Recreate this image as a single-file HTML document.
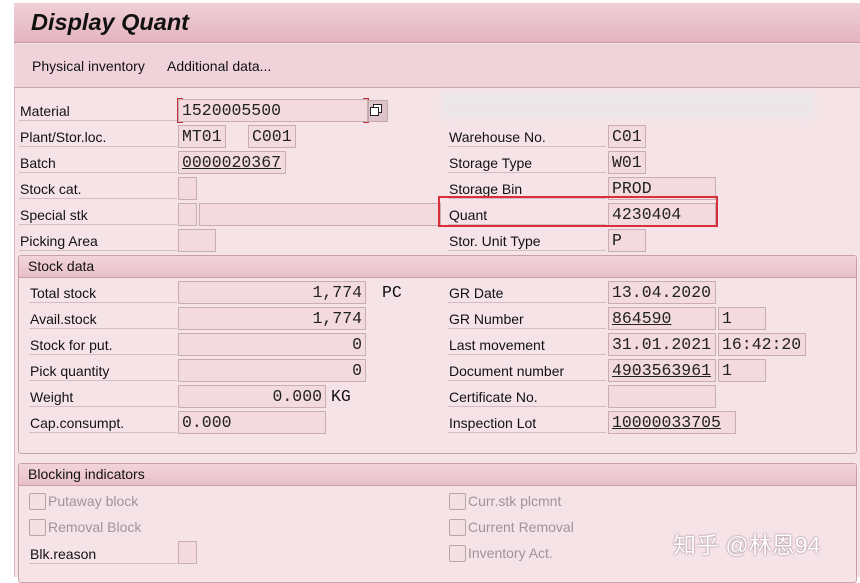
<!DOCTYPE html>
<html><head><meta charset="utf-8"><style>
*{margin:0;padding:0;box-sizing:border-box}
body{width:860px;height:577px;background:#fff;position:relative;overflow:hidden;font-family:"Liberation Sans",sans-serif;font-size:14px;color:#111}
.a{position:absolute}
.main{left:14px;top:3px;width:846px;height:574px;background:#f6e3e7;border-left:1px solid #d8b8c0}
.title{left:14px;top:3px;width:846px;height:40px;background:linear-gradient(#f0d0d8,#e4b4c0);border-bottom:1px solid #c89aa6}
.title span{position:absolute;left:17px;top:6px;font-size:23.5px;font-weight:bold;font-style:italic;color:#111}
.tb{left:14px;top:44px;width:846px;height:44px;background:#f0d3da;border-bottom:1px solid #c8a6ae}
.tb span{position:absolute;top:14px;font-size:14px}
.l{height:20px;line-height:20px;border-bottom:1px solid #d4bcc2;padding-left:1px}
.f{height:23px;border:1px solid #c8aeb4;background:#f2dade;font-family:"Liberation Mono",monospace;font-size:16.5px;line-height:21px;padding:0 3px;color:#222;white-space:nowrap;overflow:hidden}
.r{text-align:right}
.u{text-decoration:underline}
.grp{border:1px solid #c8a0aa;border-radius:3px;background:#f6e3e7}
.gh{height:22px;background:linear-gradient(#f2d4da,#e9c0c9);border-bottom:1px solid #caa0aa;padding-left:9px;line-height:21px;font-size:14px}
.cb{width:17px;height:17px;border:1px solid #b9a4a8;border-radius:2px;background:#f4e0e4}
.g{color:#a09498}
</style></head><body>
<div class="a main"></div>
<div class="a title"><span>Display Quant</span></div>
<div class="a tb"><span style="left:18px">Physical inventory</span><span style="left:153px">Additional data...</span></div>

<div class="a" style="left:442px;top:92px;width:372px;height:26px;background:#ece6e8;filter:blur(3px)"></div>

<div class="a l" style="left:19px;top:101px;width:158px">Material</div>
<div class="a f" style="left:178px;top:99px;width:190px">1520005500</div>
<div class="a" style="left:177px;top:98px;width:6px;height:25px;border:1px solid #c03030;border-right:none"></div>
<div class="a" style="left:363px;top:98px;width:6px;height:25px;border:1px solid #c03030;border-left:none"></div>
<div class="a" style="left:368px;top:100px;width:20px;height:22px;background:#ddc4ca;border:1px solid #c4a8ae"></div>
<div class="a" style="left:373px;top:104px;width:9px;height:9px;border:1px solid #222;background:#fff"></div>
<div class="a" style="left:370px;top:107px;width:9px;height:9px;border:1px solid #222;background:#fff"></div>

<div class="a l" style="left:19px;top:127px;width:158px">Plant/Stor.loc.</div>
<div class="a f" style="left:178px;top:125px;width:48px">MT01</div>
<div class="a f" style="left:248px;top:125px;width:48px">C001</div>
<div class="a l" style="left:19px;top:153px;width:158px">Batch</div>
<div class="a f u" style="left:178px;top:151px;width:108px">0000020367</div>
<div class="a l" style="left:19px;top:179px;width:158px">Stock cat.</div>
<div class="a f" style="left:178px;top:177px;width:19px"></div>
<div class="a l" style="left:19px;top:205px;width:158px">Special stk</div>
<div class="a f" style="left:178px;top:203px;width:19px"></div>
<div class="a f" style="left:199px;top:203px;width:242px"></div>
<div class="a l" style="left:19px;top:231px;width:158px">Picking Area</div>
<div class="a f" style="left:178px;top:229px;width:38px"></div>

<div class="a l" style="left:448px;top:127px;width:158px">Warehouse No.</div>
<div class="a f" style="left:608px;top:125px;width:38px">C01</div>
<div class="a l" style="left:448px;top:153px;width:158px">Storage Type</div>
<div class="a f" style="left:608px;top:151px;width:38px">W01</div>
<div class="a l" style="left:448px;top:179px;width:158px">Storage Bin</div>
<div class="a f" style="left:608px;top:177px;width:108px">PROD</div>
<div class="a l" style="left:448px;top:205px;width:158px">Quant</div>
<div class="a f" style="left:608px;top:203px;width:108px">4230404</div>
<div class="a l" style="left:448px;top:231px;width:158px">Stor. Unit Type</div>
<div class="a f" style="left:608px;top:229px;width:38px">P</div>
<div class="a" style="left:438px;top:196px;width:280px;height:31px;border:2px solid #d8303a"></div>

<div class="a grp" style="left:18px;top:255px;width:839px;height:199px"><div class="gh">Stock data</div></div>
<div class="a l" style="left:29px;top:283px;width:148px">Total stock</div>
<div class="a f r" style="left:178px;top:281px;width:188px">1,774</div>
<div class="a" style="left:382px;top:283px;font-family:'Liberation Mono',monospace;font-size:16.5px">PC</div>
<div class="a l" style="left:29px;top:309px;width:148px">Avail.stock</div>
<div class="a f r" style="left:178px;top:307px;width:188px">1,774</div>
<div class="a l" style="left:29px;top:335px;width:148px">Stock for put.</div>
<div class="a f r" style="left:178px;top:333px;width:188px">0</div>
<div class="a l" style="left:29px;top:361px;width:148px">Pick quantity</div>
<div class="a f r" style="left:178px;top:359px;width:188px">0</div>
<div class="a l" style="left:29px;top:387px;width:148px">Weight</div>
<div class="a f r" style="left:178px;top:385px;width:148px">0.000</div>
<div class="a" style="left:331px;top:387px;font-family:'Liberation Mono',monospace;font-size:16.5px">KG</div>
<div class="a l" style="left:29px;top:413px;width:148px">Cap.consumpt.</div>
<div class="a f" style="left:178px;top:411px;width:148px">0.000</div>

<div class="a l" style="left:448px;top:283px;width:158px">GR Date</div>
<div class="a f" style="left:608px;top:281px;width:108px">13.04.2020</div>
<div class="a l" style="left:448px;top:309px;width:158px">GR Number</div>
<div class="a f u" style="left:608px;top:307px;width:108px">864590</div>
<div class="a f" style="left:718px;top:307px;width:48px">1</div>
<div class="a l" style="left:448px;top:335px;width:158px">Last movement</div>
<div class="a f" style="left:608px;top:333px;width:108px">31.01.2021</div>
<div class="a f" style="left:718px;top:333px;width:88px">16:42:20</div>
<div class="a l" style="left:448px;top:361px;width:158px">Document number</div>
<div class="a f u" style="left:608px;top:359px;width:108px">4903563961</div>
<div class="a f" style="left:718px;top:359px;width:48px">1</div>
<div class="a l" style="left:448px;top:387px;width:158px">Certificate No.</div>
<div class="a f" style="left:608px;top:385px;width:108px"></div>
<div class="a l" style="left:448px;top:413px;width:158px">Inspection Lot</div>
<div class="a f u" style="left:608px;top:411px;width:128px">10000033705</div>

<div class="a grp" style="left:18px;top:463px;width:839px;height:120px"><div class="gh">Blocking indicators</div></div>
<div class="a cb" style="left:29px;top:493px"></div><div class="a g" style="left:48px;top:493px">Putaway block</div>
<div class="a cb" style="left:29px;top:519px"></div><div class="a g" style="left:48px;top:519px">Removal Block</div>
<div class="a l" style="left:29px;top:544px;width:148px">Blk.reason</div>
<div class="a f" style="left:178px;top:541px;width:19px"></div>
<div class="a cb" style="left:449px;top:493px"></div><div class="a g" style="left:468px;top:493px">Curr.stk plcmnt</div>
<div class="a cb" style="left:449px;top:519px"></div><div class="a g" style="left:468px;top:519px">Current Removal</div>
<div class="a cb" style="left:449px;top:545px"></div><div class="a g" style="left:468px;top:545px">Inventory Act.</div>
<div class="a" style="left:673px;top:526px;font-family:'Liberation Sans','Noto Sans CJK SC',sans-serif;font-size:23px;color:#fff;text-shadow:0 0 2px #a08890,0 0 1px #a08890">知乎 @林恩94</div>
</body></html>
